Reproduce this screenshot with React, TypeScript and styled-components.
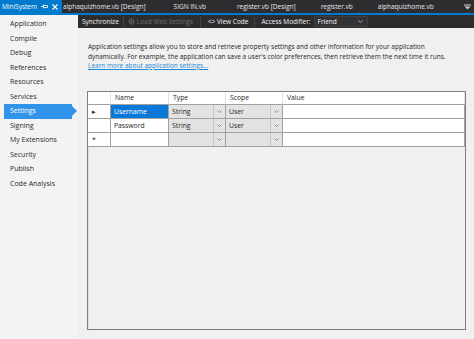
import React from "react";
import styled, { createGlobalStyle } from "styled-components";

const GlobalStyle = createGlobalStyle`
  html, body { margin: 0; padding: 0; background: #f0f0f0; }
  body { font-family: "Open Sans", "Noto Sans", sans-serif; }
  #root { width: 474px; height: 339px; overflow: hidden; }
`;

const Window = styled.div`
  display: flex;
  flex-direction: column;
  width: 474px;
  height: 339px;
  background: #f0f0f0;
`;

const TabStrip = styled.div`
  display: flex;
  align-items: stretch;
  height: 13px;
  background: #2d2d30;
  border-bottom: 2px solid #007acc;
`;

const Tab = styled.div<{ $active?: boolean; $padRight: number }>`
  display: flex;
  align-items: center;
  gap: 4px;
  padding: 0 ${(p) => p.$padRight}px 0 ${(p) => (p.$active ? 2 : 1)}px;
  background: ${(p) => (p.$active ? "#007acc" : "transparent")};
  color: ${(p) => (p.$active ? "#ffffff" : "#e8e8e8")};
  font-size: 6.5px;
  line-height: 13px;
  white-space: nowrap;
`;

const StripMenu = styled.div`
  margin-left: auto;
  padding-right: 3px;
  display: flex;
  align-items: center;
`;

const Body = styled.div`
  display: flex;
  flex: 1;
  min-height: 0;
`;

const Sidebar = styled.div`
  width: 78px;
  flex-shrink: 0;
  padding-top: 2px;
  background: #f3f3f3;
  display: flex;
  flex-direction: column;
`;

const NavItem = styled.div<{ $selected?: boolean }>`
  position: relative;
  height: 14.5px;
  line-height: 14.5px;
  font-size: 7px;
  color: ${(p) => (p.$selected ? "#ffffff" : "#2a2a2a")};
  background: ${(p) => (p.$selected ? "#3293eb" : "transparent")};
  margin: ${(p) => (p.$selected ? "0 6px 0 4px" : "0")};
  padding-left: ${(p) => (p.$selected ? 6 : 10)}px;
  &::after {
    content: "";
    display: ${(p) => (p.$selected ? "block" : "none")};
    position: absolute;
    right: -5px;
    top: 2px;
    border-left: 5px solid #3293eb;
    border-top: 5px solid transparent;
    border-bottom: 5px solid transparent;
  }
`;

const Main = styled.div`
  flex: 1;
  display: flex;
  flex-direction: column;
  min-width: 0;
`;

const Toolbar = styled.div`
  height: 13px;
  background: #2d2d30;
  display: flex;
  align-items: center;
  padding-left: 2px;
  font-size: 6.5px;
  color: #f1f1f1;
  white-space: nowrap;
`;

const ToolButton = styled.div<{ $disabled?: boolean }>`
  display: flex;
  align-items: center;
  gap: 2px;
  padding: 0 2px;
  color: ${(p) => (p.$disabled ? "#6d6d6d" : "#f1f1f1")};
`;

const Separator = styled.div<{ $space: number }>`
  width: 1px;
  height: 10px;
  background: #46464a;
  margin: 0 ${(p) => p.$space}px;
`;

const Combo = styled.div`
  display: flex;
  align-items: center;
  justify-content: space-between;
  width: 54px;
  height: 11px;
  margin-left: 1px;
  padding: 0 4px 0 3px;
  background: #333337;
  border: 1px solid #3f3f46;
  box-sizing: border-box;
`;

const Content = styled.div`
  flex: 1;
  display: flex;
  flex-direction: column;
  padding: 14px 8px 9px 9px;
  min-height: 0;
`;

const Description = styled.p`
  margin: 0 0 0 1px;
  font-size: 6.5px;
  line-height: 9.5px;
  color: #262626;
`;

const Link = styled.a`
  color: #1c8ad8;
  text-decoration: underline;
`;

const GridBox = styled.div`
  flex: 1;
  margin-top: 20px;
  border: 1px solid #7e7e7e;
  background: #f0f0f0;
  box-shadow: inset 1px 1px 0 #dcdcdc;
`;

const Grid = styled.div`
  display: grid;
  grid-template-columns: 23px 58px 57px 57px 1fr;
  grid-template-rows: 13px 14px 14px 14px;
  font-size: 6.8px;
  color: #262626;
`;

const HeadCell = styled.div`
  background: #ffffff;
  border-right: 1px solid #e2e2e2;
  border-bottom: 1px solid #a0a0a0;
  padding-left: 4px;
  line-height: 12px;
`;

const Cell = styled.div<{ $selected?: boolean }>`
  background: ${(p) => (p.$selected ? "#0a78d7" : "#ffffff")};
  color: ${(p) => (p.$selected ? "#ffffff" : "#262626")};
  border-right: 1px solid #a0a0a0;
  border-bottom: 1px solid #a0a0a0;
  padding-left: 3px;
  line-height: 13px;
  white-space: nowrap;
`;

const RowHead = styled.div`
  background: #ffffff;
  border-right: 1px solid #a0a0a0;
  border-bottom: 1px solid #a0a0a0;
  display: flex;
  align-items: center;
  padding-left: 4px;
  font-size: 7px;
`;

const ComboCell = styled.div`
  display: flex;
  background: #e3e3e3;
  border-right: 1px solid #a0a0a0;
  border-bottom: 1px solid #a0a0a0;
  line-height: 13px;
`;

const ComboText = styled.div`
  flex: 1;
  padding-left: 3px;
`;

const ComboButton = styled.div`
  width: 11px;
  display: flex;
  align-items: center;
  justify-content: center;
  border-left: 1px solid #c6c6c6;
`;

const Pin = () => (
  <svg width="7" height="5" viewBox="0 0 7 5">
    <path d="M0 2.5H2M2.5 0.5V4.5M2.5 1.5H6.5V3.5H2.5" stroke="#ffffff" strokeWidth="0.8" fill="none" />
  </svg>
);

const Close = () => (
  <svg width="6" height="6" viewBox="0 0 6 6">
    <path d="M0.5 0.5L5.5 5.5M5.5 0.5L0.5 5.5" stroke="#ffffff" strokeWidth="1.1" />
  </svg>
);

const StripDropdown = () => (
  <svg width="7" height="6" viewBox="0 0 7 6">
    <rect x="0" y="0.5" width="7" height="1" fill="#d0d0d0" />
    <path d="M0.5 2.5H6.5L3.5 5.5Z" fill="#d0d0d0" />
  </svg>
);

const Chevron = ({ color = "#777777" }: { color?: string }) => (
  <svg width="5" height="3" viewBox="0 0 5 3">
    <path d="M0.5 0.5L2.5 2.5L4.5 0.5" stroke={color} strokeWidth="0.8" fill="none" />
  </svg>
);

const LoadIcon = () => (
  <svg width="7" height="7" viewBox="0 0 7 7">
    <circle cx="3.5" cy="3.5" r="2.6" stroke="#6d6d6d" strokeWidth="0.8" fill="none" />
    <path d="M1 3.5H6M3.5 1V6" stroke="#6d6d6d" strokeWidth="0.6" />
  </svg>
);

const tabs = [
  { label: "alphaquizhome.vb [Design]", pad: 27 },
  { label: "SIGN IN.vb", pad: 30 },
  { label: "register.vb [Design]", pad: 24 },
  { label: "register.vb", pad: 24 },
  { label: "alphaquizhome.vb", pad: 10 },
];

const navItems = [
  "Application",
  "Compile",
  "Debug",
  "References",
  "Resources",
  "Services",
  "Settings",
  "Signing",
  "My Extensions",
  "Security",
  "Publish",
  "Code Analysis",
];

const rows = [
  { marker: "▸", name: "Username", type: "String", scope: "User", selected: true },
  { marker: "", name: "Password", type: "String", scope: "User" },
  { marker: "*", name: "", type: "", scope: "" },
];

export default function App() {
  return (
    <Window>
      <GlobalStyle />
      <TabStrip>
        <Tab $active $padRight={4}>
          MiniSystem
          <Pin />
          <Close />
        </Tab>
        {tabs.map((t) => (
          <Tab key={t.label} $padRight={t.pad}>
            {t.label}
          </Tab>
        ))}
        <StripMenu>
          <StripDropdown />
        </StripMenu>
      </TabStrip>
      <Body>
        <Sidebar>
          {navItems.map((n) => (
            <NavItem key={n} $selected={n === "Settings"}>
              {n}
            </NavItem>
          ))}
        </Sidebar>
        <Main>
          <Toolbar>
            <ToolButton>Synchronize</ToolButton>
            <Separator $space={2} />
            <ToolButton $disabled>
              <LoadIcon />
              Load Web Settings
            </ToolButton>
            <Separator $space={5} />
            <ToolButton>&lt;&gt; View Code</ToolButton>
            <Separator $space={4} />
            <ToolButton>Access Modifier:</ToolButton>
            <Combo>
              Friend
              <Chevron color="#d0d0d0" />
            </Combo>
          </Toolbar>
          <Content>
            <Description>
              Application settings allow you to store and retrieve property settings and other information for your application
              <br />
              dynamically. For example, the application can save a user's color preferences, then retrieve them the next time it runs.
              <br />
              <Link>Learn more about application settings...</Link>
            </Description>
            <GridBox>
              <Grid>
                <HeadCell />
                <HeadCell>Name</HeadCell>
                <HeadCell>Type</HeadCell>
                <HeadCell>Scope</HeadCell>
                <HeadCell>Value</HeadCell>
                {rows.map((r, i) => (
                  <React.Fragment key={i}>
                    <RowHead>{r.marker}</RowHead>
                    <Cell $selected={r.selected}>{r.name}</Cell>
                    <ComboCell>
                      <ComboText>{r.type}</ComboText>
                      <ComboButton>
                        <Chevron />
                      </ComboButton>
                    </ComboCell>
                    <ComboCell>
                      <ComboText>{r.scope}</ComboText>
                      <ComboButton>
                        <Chevron />
                      </ComboButton>
                    </ComboCell>
                    <Cell />
                  </React.Fragment>
                ))}
              </Grid>
            </GridBox>
          </Content>
        </Main>
      </Body>
    </Window>
  );
}
